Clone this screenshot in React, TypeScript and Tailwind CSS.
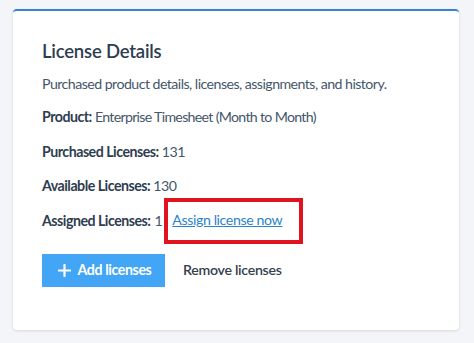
export default function App() {
  return (
    <div className="w-full h-[343px] bg-[#f3f5f8] pt-[9px] pl-[13px] pr-[15px] font-['Lato',sans-serif] text-[#2e3d4f]">
      <div className="h-[321px] bg-white border-t-2 border-[#3a80d4] rounded-[4px] shadow-[0_1px_3px_rgba(0,0,0,0.12)] pl-[29px] pt-[27px]">
        <h2 className="text-[18.5px] leading-[26px] font-semibold tracking-[-0.2px]">License Details</h2>
        <p className="mt-[9px] text-[14.2px] leading-[22px] tracking-[-0.55px] text-[#45566a]">
          Purchased product details, licenses, assignments, and history.
        </p>
        <div className="mt-[11px] flex flex-col gap-[12.5px] text-[14.2px] leading-[22px] tracking-[-0.5px]">
          <p>
            <span className="font-bold">Product:</span>{" "}
            <span className="text-[#45566a] tracking-[-0.7px]">Enterprise Timesheet (Month to Month)</span>
          </p>
          <p>
            <span className="font-bold">Purchased Licenses:</span> <span className="text-[#45566a]">131</span>
          </p>
          <p>
            <span className="font-bold">Available Licenses:</span> <span className="text-[#45566a]">130</span>
          </p>
          <p className="flex items-center">
            <span className="font-bold">Assigned Licenses:</span>
            <span className="ml-1 text-[#45566a]">1</span>
            <span className="ml-[2px] w-[139px] border-4 border-[#e0141e] pl-[4px] pt-[7px] pb-[9px] -my-[12px]">
              <a href="#" className="text-[#2d83c9] underline tracking-[-0.4px]">Assign license now</a>
            </span>
          </p>
        </div>
        <div className="mt-[22px] flex items-center gap-[18px]">
          <button className="h-[33px] w-[123px] bg-[#42a5f5] text-white text-[14.2px] tracking-[-0.4px] font-bold flex items-center justify-center gap-[7px] pl-[2px]">
            <svg width="13" height="13" viewBox="0 0 14 14" fill="none" stroke="white" strokeWidth="2.4" strokeLinecap="round">
              <path d="M7 1v12M1 7h12" />
            </svg>
            Add licenses
          </button>
          <button className="text-[14.2px] tracking-[-0.3px] font-semibold text-[#34404d]">Remove licenses</button>
        </div>
      </div>
    </div>
  );
}
